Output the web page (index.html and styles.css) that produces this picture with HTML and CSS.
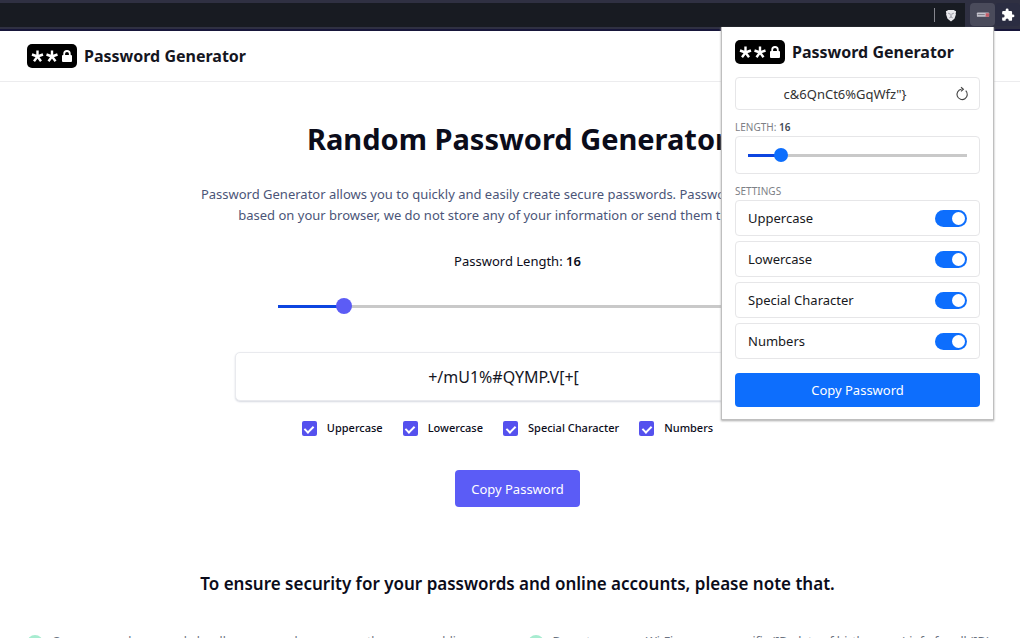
FILE: index.html
```html
<!DOCTYPE html>
<html lang="en">
<head>
    <meta charset="UTF-8">
    <meta name="viewport" content="width=device-width, initial-scale=1.0">
    <title>Password Generator</title>
    <link rel="stylesheet" href="styles.css">
</head>
<body>

<!-- shared icons -->
<svg class="sprite" aria-hidden="true">
    <symbol id="logo" viewBox="0 0 50 24">
        <rect width="50" height="24" rx="5" fill="#000"/>
        <g stroke="#fff" stroke-width="2.4">
            <path d="M10.500 6.500v6M10.500 12.500l-5.500-2M10.500 12.500l5.500-2M10.500 12.500l-3.500 4.800M10.500 12.500l3.500 4.800"/>
            <path d="M25 6.500v6M25 12.500l-5.500-2M25 12.500l5.500-2M25 12.500l-3.500 4.800M25 12.500l3.500 4.800"/>
        </g>
        <rect x="35" y="11" width="10" height="7" rx="1" fill="#fff"/>
        <path d="M37.200 12v-2.200a2.800 2.800 0 0 1 5.600 0V12" fill="none" stroke="#fff" stroke-width="1.800"/>
    </symbol>
    <symbol id="check" viewBox="0 0 16 16">
        <circle cx="8" cy="8" r="8" fill="#a7ecd0"/>
        <path d="M4.500 8.200l2.400 2.400 4.600-4.800" fill="none" stroke="#fff" stroke-width="1.600"/>
    </symbol>
</svg>

<div class="browser-bar">
    <div class="address">
        <span class="divider"></span>
        <svg class="shield" viewBox="0 0 12 14">
            <path d="M3 1h6l1.200 1 1.300.5-.5 2.500.3 1-1.600 4.500L6 13.500 2.300 10.500.7 6 1 5 .5 2.500 1.800 2z" fill="#e8e8ec"/>
            <path d="M3 4.500l2 1M9 4.500l-2 1M6 5v3.500M4.200 9.500L6 8.500l1.800 1" fill="none" stroke="#8d8e98" stroke-width="1"/>
        </svg>
    </div>
    <div class="extensions">
        <button class="ext active" aria-label="Password Generator">
            <svg viewBox="0 0 16 16">
                <rect x="1" y="5" width="14" height="5" rx="1" fill="#c4c3cc"/>
                <path d="M2 7.500h8" stroke="#73717d"/>
                <rect x="11" y="6" width="4" height="4" fill="#c45b66"/>
            </svg>
        </button>
        <button class="ext" aria-label="Extensions">
            <svg viewBox="0 0 24 24"><path fill="#fff" d="M20.500 11H19V7a2 2 0 0 0-2-2h-4V3.500a2.500 2.500 0 0 0-5 0V5H4a2 2 0 0 0-2 2v3.800h1.500a2.700 2.700 0 0 1 0 5.400H2V20c0 1.100.9 2 2 2h3.800v-1.500a2.700 2.700 0 0 1 5.400 0V22H17a2 2 0 0 0 2-2v-4h1.500a2.500 2.500 0 0 0 0-5z"/></svg>
        </button>
    </div>
</div>

<div class="page">
    <header class="header">
        <a class="brand" href="#"><svg class="logo"><use href="#logo"/></svg>Password Generator</a>
    </header>

    <main class="main">
        <h1>Random Password Generator</h1>
        <p class="intro">Password Generator allows you to quickly and easily create secure passwords. Passwords are generated<br>based on your browser, we do not store any of your information or send them to any server.</p>

        <label class="length-label" for="length">Password Length: <b>16</b></label>
        <input class="range main-range" type="range" id="length" min="4" max="100" value="16">

        <input class="password" type="text" value="+/mU1%#QYMP.V[+[" aria-label="Password" readonly>

        <div class="options">
            <label><input type="checkbox" checked>Uppercase</label>
            <label><input type="checkbox" checked>Lowercase</label>
            <label><input type="checkbox" checked>Special Character</label>
            <label><input type="checkbox" checked>Numbers</label>
        </div>

        <button class="button">Copy Password</button>
    </main>

    <section class="tips">
        <h2>To ensure security for your passwords and online accounts, please note that.</h2>
        <ul>
            <li><svg><use href="#check"/></svg>Our passwords are made locally, so never share or save them on a public computer.</li>
            <li><svg><use href="#check"/></svg>Do not use your Wi-Fi name or specific (ID, date of birth, name) info for all (ID) accounts.</li>
        </ul>
    </section>
</div>

<aside class="popup">
    <div class="brand"><svg class="logo"><use href="#logo"/></svg>Password Generator</div>

    <div class="box result">
        <input type="text" value="c&amp;6QnCt6%GqWfz&quot;}" aria-label="Generated password" readonly>
        <button class="refresh" aria-label="Refresh">
            <svg viewBox="0 0 16 16" fill="none" stroke="#444" stroke-width="1.200">
                <path d="M12.500 5A5.500 5.500 0 1 1 8 3.500"/>
                <path d="M7.500 1.300L10 3.500 7.500 5.700"/>
            </svg>
        </button>
    </div>

    <label class="caption" for="popupLength">LENGTH: <b>16</b></label>
    <div class="box slider">
        <input class="range" type="range" id="popupLength" min="4" max="100" value="16">
    </div>

    <div class="caption">SETTINGS</div>
    <div class="settings">
        <label class="box">Uppercase<input class="switch" type="checkbox" checked></label>
        <label class="box">Lowercase<input class="switch" type="checkbox" checked></label>
        <label class="box">Special Character<input class="switch" type="checkbox" checked></label>
        <label class="box">Numbers<input class="switch" type="checkbox" checked></label>
    </div>

    <button class="button">Copy Password</button>
</aside>

</body>
</html>
```

FILE: styles.css
```css
* {
    box-sizing: border-box;
}
body {
    margin: 0;
    height: 100vh;
    overflow: hidden;
    background: #fff;
    color: #0b0c1a;
    font-family: "Noto Sans", sans-serif;
    font-size: 13px;
}
input, button {
    margin: 0;
    font-family: inherit;
}
button {
    padding: 0;
    border: none;
    cursor: pointer;
}
.sprite {
    position: absolute;
    width: 0;
    height: 0;
}

/* browser toolbar */
.browser-bar {
    display: flex;
    height: 31px;
    padding-top: 3px;
    background: #2f3042;
    border-bottom: 2px solid #17163a;
}
.address {
    flex: 1;
    display: flex;
    align-items: center;
    justify-content: flex-end;
    gap: 10px;
    height: 24px;
    padding-right: 8px;
    background: #181b22;
}
.divider {
    width: 1px;
    height: 14px;
    background: #85868e;
}
.shield {
    width: 12px;
    height: 13px;
}
.extensions {
    display: flex;
    margin-left: 5px;
}
.ext {
    display: flex;
    align-items: center;
    justify-content: center;
    width: 25px;
    height: 23px;
    border-radius: 4px;
    background: #2b2d42;
}
.ext.active {
    background: #4a4b5b;
}
.ext svg {
    width: 14px;
    height: 14px;
}

/* page */
.page {
    margin-right: -15px;
}
.header {
    display: flex;
    align-items: center;
    height: 51px;
    padding: 0 27px;
    border-bottom: 1px solid #ececee;
}
.brand {
    display: flex;
    align-items: center;
    gap: 7px;
    color: #15161f;
    font-size: 16px;
    font-weight: 700;
    line-height: 24px;
    text-decoration: none;
}
.logo {
    width: 50px;
    height: 24px;
}
.main {
    display: flex;
    flex-direction: column;
    align-items: center;
    padding: 36px 27px 0;
}
h1 {
    margin: 0;
    font-size: 29px;
    font-weight: 700;
    line-height: 42px;
}
.intro {
    margin: 24px 0 0;
    color: #4b5578;
    line-height: 21px;
    text-align: center;
}
.length-label {
    margin-top: 25px;
    line-height: 20px;
}
.length-label b {
    font-weight: 600;
}
.range {
    appearance: none;
    display: block;
    width: 100%;
    height: 16px;
    background: linear-gradient(90deg, #0d45e0 14%, #c9c9c9 14%) center / 100% 3px no-repeat;
}
.range::-webkit-slider-thumb {
    appearance: none;
    width: 14px;
    height: 14px;
    border-radius: 50%;
    background: #0d6efd;
}
.main-range {
    width: 480px;
    margin-top: 27px;
}
.main-range::-webkit-slider-thumb {
    width: 16px;
    height: 16px;
    background: #5c5cf5;
}
.password {
    width: 566px;
    height: 49px;
    margin-top: 38px;
    padding: 0 44px 0 16px;
    border: 1px solid #e9eaee;
    border-radius: 5px;
    box-shadow: 0 1px 2px #d5d8e0;
    color: #15161f;
    font-size: 16px;
    text-align: center;
}
.options {
    display: flex;
    margin-top: 17px;
}
.options label {
    display: flex;
    align-items: center;
    gap: 10px;
    margin-right: 20px;
    font-size: 11px;
    font-weight: 500;
    line-height: 20px;
}
.options input {
    appearance: none;
    width: 15px;
    height: 15px;
    border-radius: 2px;
    background: #5551ee;
}
.options input::before {
    content: "";
    display: block;
    width: 4px;
    height: 7px;
    margin: 3px auto 0;
    border: solid #fff;
    border-width: 0 2px 2px 0;
    transform: rotate(45deg);
}
.button {
    border-radius: 4px;
    color: #fff;
    font-size: 13px;
}
.main .button {
    width: 125px;
    height: 37px;
    margin-top: 32px;
    background: #5b5cf6;
}

/* tips */
.tips {
    padding: 65px 27px 0;
}
h2 {
    margin: 0;
    font-size: 17px;
    font-weight: 600;
    line-height: 24px;
    text-align: center;
}
.tips ul {
    display: grid;
    grid-template-columns: 1fr 1fr;
    gap: 20px;
    margin: 36px 0 0;
    padding: 0;
    color: #6b7280;
    font-size: 12px;
    line-height: 20px;
    list-style: none;
}
.tips li {
    display: flex;
    gap: 9px;
}
.tips svg {
    flex: none;
    width: 16px;
    height: 16px;
    margin-top: 3px;
}

/* extension popup */
.popup {
    position: absolute;
    top: 27px;
    right: 26px;
    width: 273px;
    padding: 13px 13px 12px;
    border: solid #bfbfbf;
    border-width: 0 1px 1px;
    background: #fff;
    box-shadow: 0 1px 2px #aaa;
    color: #17181c;
}
.box {
    display: flex;
    align-items: center;
    border: 1px solid #e6e6e8;
    border-radius: 4px;
}
.result {
    height: 33px;
    margin-top: 13px;
    padding-right: 10px;
}
.result input {
    flex: 1;
    min-width: 0;
    padding: 0;
    border: none;
    color: #333;
    font-size: 13px;
    text-align: center;
}
.refresh {
    display: flex;
    background: none;
}
.refresh svg {
    width: 15px;
    height: 15px;
}
.caption {
    display: block;
    padding-top: 9px;
    color: #7d8086;
    font-size: 10px;
    line-height: 17px;
}
.caption b {
    color: #3f4854;
    font-weight: 600;
}
.slider {
    height: 38px;
    padding: 0 12px;
}
.settings {
    display: flex;
    flex-direction: column;
    gap: 5px;
}
.settings .box {
    justify-content: space-between;
    height: 36px;
    padding: 0 12px;
}
.switch {
    appearance: none;
    width: 32px;
    height: 17px;
    padding: 2px;
    border-radius: 9px;
    background: #0d6efd;
}
.switch::before {
    content: "";
    display: block;
    width: 13px;
    height: 13px;
    margin-left: auto;
    border-radius: 50%;
    background: #fff;
}
.popup .button {
    width: 100%;
    height: 34px;
    margin-top: 14px;
    background: #0d6efd;
}
```
